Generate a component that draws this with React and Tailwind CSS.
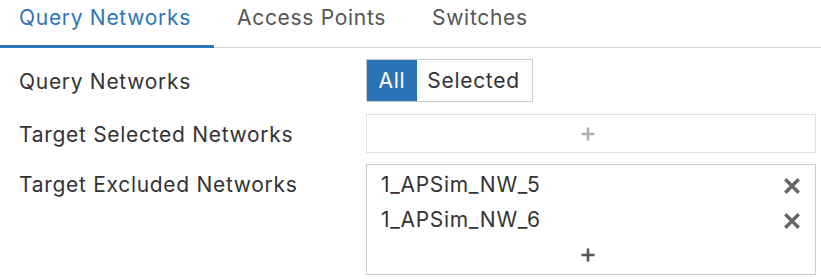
import React from "react";

function XIcon() {
  return (
    <svg width="16" height="16" viewBox="0 0 16 16" className="block">
      <path d="M2.5 2.5 L13.5 13.5 M13.5 2.5 L2.5 13.5" stroke="#666666" strokeWidth="3.4" strokeLinecap="square" fill="none" />
    </svg>
  );
}

function PlusIcon({ color }) {
  return (
    <svg width="16" height="16" viewBox="0 0 16 16" className="block">
      <path d="M8 1.5 V14.5 M1.5 8 H14.5" stroke={color} strokeWidth="2.6" fill="none" />
    </svg>
  );
}

export default function App() {
  const tabs = ["Query Networks", "Access Points", "Switches"];
  return (
    <div className="w-[821px] h-[279px] bg-white overflow-hidden tracking-[0.7px]" style={{ fontFamily: "Inter, 'Noto Sans', sans-serif" }}>
      <div className="flex h-[48px] border-b border-[#d4d4d4]">
        {tabs.map((t, i) => (
          <div
            key={t}
            className={
              i === 0
                ? "h-[48px] -mb-px pl-[19px] pt-[6px] border-b-[3px] border-[#2e75b8] text-[21px] leading-[24px] text-[#2e75b8] w-[214px]"
                : "h-[48px] -mb-px px-[23px] pt-[6px] text-[21px] leading-[24px] text-[#555555]"
            }
          >
            {t}
          </div>
        ))}
      </div>

      <div className="pt-[11px] pr-[5px] text-[21px] text-[#333333]">
        <div className="flex items-center">
          <div className="w-[366px] pl-[19px] leading-[24px] pt-[2px]">Query Networks</div>
          <div className="flex h-[43px] border border-[#cccccc]">
            <div className="w-[50px] bg-[#2b73b7] text-white flex items-center justify-center leading-[24px]">All</div>
            <div className="w-[115px] flex items-center justify-center leading-[24px] text-[#333333] pr-[2px]">Selected</div>
          </div>
        </div>

        <div className="flex items-center mt-[12px]">
          <div className="w-[366px] pl-[19px] leading-[24px] pt-[2px]">Target Selected Networks</div>
          <div className="flex-1 h-[39px] border border-[#e2e2e2] flex items-center justify-center pr-[6px]">
            <PlusIcon color="#b0b0b0" />
          </div>
        </div>

        <div className="flex items-start mt-[11px]">
          <div className="w-[366px] pl-[19px] leading-[35px] mt-[3px]">Target Excluded Networks</div>
          <div className="flex-1 h-[111px] border border-[#cccccc] pt-[2px]">
            {["1_APSim_NW_5", "1_APSim_NW_6"].map((n) => (
              <div key={n} className="flex items-center justify-between h-[35px] pl-[14px] pr-[15px]">
                <span className="leading-[35px] text-[#333333]">{n}</span>
                <span className="pt-[2px]"><XIcon /></span>
              </div>
            ))}
            <div className="h-[35px] flex items-center justify-center pr-[6px] pt-[1px]">
              <PlusIcon color="#555555" />
            </div>
          </div>
        </div>
      </div>
    </div>
  );
}
